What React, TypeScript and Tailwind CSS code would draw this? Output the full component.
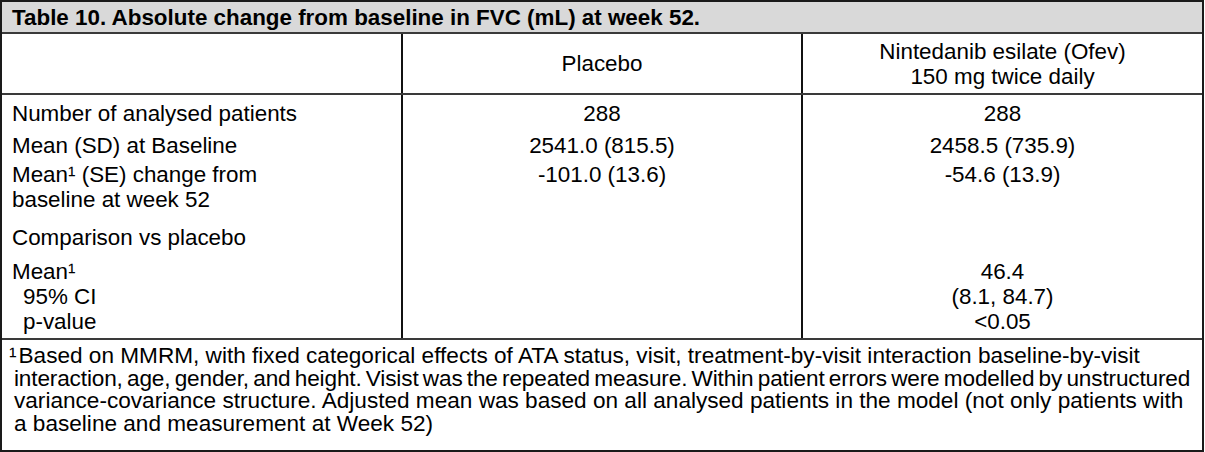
import React from "react";

const rows = [
    { label: ["Number of analysed patients"], placebo: ["288"], ofev: ["288"], pt: "pt-[6px]" },
    { label: ["Mean (SD) at Baseline"], placebo: ["2541.0 (815.5)"], ofev: ["2458.5 (735.9)"], pt: "pt-[7px]" },
    { label: ["Mean¹ (SE) change from", "baseline at week 52"], placebo: ["-101.0 (13.6)"], ofev: ["-54.6 (13.9)"], pt: "pt-[4px]" },
    { label: ["Comparison vs placebo"], placebo: [], ofev: [], pt: "pt-[13px]" },
];

function App() {
    return (
        <div className="w-[1205px] h-[452px] bg-white text-black font-['Liberation_Sans',Arial,sans-serif]">
            <div className="w-[1204px] h-[452px] border-2 border-[#1a1a1a] flex flex-col">

                {/* Title */}
                <div className="h-[32px] bg-[#d9d9d9] border-b-2 border-[#3a3a3a] pl-[10px] pt-[4px] text-[22.4px] leading-[24px] font-bold">
                    Table 10. Absolute change from baseline in FVC (mL) at week 52.
                </div>

                {/* Header */}
                <div className="grid grid-cols-[399px_400px_1fr] h-[61px] border-b-2 border-[#3a3a3a] text-[22.4px] leading-[25px]">
                    <div></div>
                    <div className="border-l-2 border-[#111] flex items-center justify-center">Placebo</div>
                    <div className="border-l-2 border-[#111] flex flex-col items-center justify-center">
                        <span>Nintedanib esilate (Ofev)</span>
                        <span>150 mg twice daily</span>
                    </div>
                </div>

                {/* Body */}
                <div className="grid grid-cols-[399px_400px_1fr] flex-1 text-[22.4px] leading-[25px]">
                    <div className="pl-[10px]">
                        {rows.map((r, i) => (
                            <div key={i} className={r.pt}>
                                {r.label.map((l) => <div key={l}>{l}</div>)}
                            </div>
                        ))}
                        <div className="pt-[9px]">
                            <div>Mean¹</div>
                            <div className="pl-[11px]">95% CI</div>
                            <div className="pl-[11px]">p-value</div>
                        </div>
                    </div>
                    <div className="border-l-2 border-[#111] text-center">
                        {rows.map((r, i) => (
                            <div key={i} className={r.pt}>
                                {r.label.map((l, j) => <div key={j}>{r.placebo[j] ?? "\u00a0"}</div>)}
                            </div>
                        ))}
                    </div>
                    <div className="border-l-2 border-[#111] text-center">
                        {rows.map((r, i) => (
                            <div key={i} className={r.pt}>
                                {r.label.map((l, j) => <div key={j}>{r.ofev[j] ?? "\u00a0"}</div>)}
                            </div>
                        ))}
                        <div className="pt-[9px]">
                            <div>46.4</div>
                            <div>(8.1, 84.7)</div>
                            <div>&lt;0.05</div>
                        </div>
                    </div>
                </div>

                {/* Footnote */}
                <div className="h-[112px] border-t-2 border-[#3a3a3a] pl-[12px] pt-[5px] text-[22.6px] leading-[22.7px] whitespace-nowrap">
                    <div className="-ml-[5px]"><span className="mr-[2px]">¹</span>Based on MMRM, with fixed categorical effects of ATA status, visit, treatment-by-visit interaction baseline-by-visit</div>
                    <div className="[word-spacing:-1.85px] tracking-[-0.15px]">interaction, age, gender, and height. Visist was the repeated measure. Within patient errors were modelled by unstructured</div>
                    <div>variance-covariance structure. Adjusted mean was based on all analysed patients in the model (not only patients with</div>
                    <div>a baseline and measurement at Week 52)</div>
                </div>

            </div>
        </div>
    );
}

export default App;
